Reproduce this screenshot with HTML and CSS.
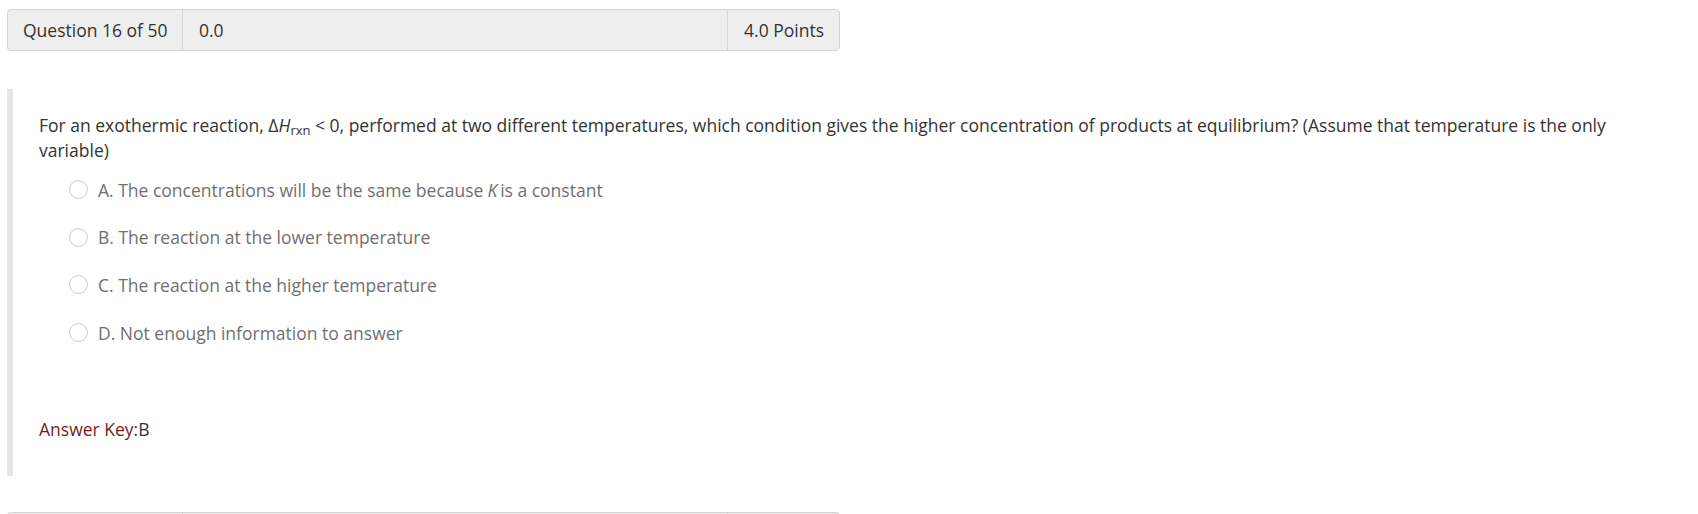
FILE: index.html
```html
<!DOCTYPE html>
<html lang="en">
<head>
<meta charset="utf-8">
<title>Question 16 of 50</title>
<link rel="stylesheet" href="styles.css">
</head>
<body>
<div class="page">
  <div class="qbar">
    <div class="cell num">Question 16 of 50</div>
    <div class="cell score">0.0</div>
    <div class="cell pts">4.0 Points</div>
  </div>
  <div class="question">
    <div class="prompt">For an exothermic reaction, Δ<i>H</i><sub>rxn</sub> &lt; 0, performed at two different temperatures, which condition gives the higher concentration of products at equilibrium? (Assume that temperature is the only variable)</div>
    <ul class="options">
      <li><span class="radio"></span>A. The concentrations will be the same because <i>K</i>&thinsp;is a constant</li>
      <li><span class="radio"></span>B. The reaction at the lower temperature</li>
      <li><span class="radio"></span>C. The reaction at the higher temperature</li>
      <li><span class="radio"></span>D. Not enough information to answer</li>
    </ul>
    <div class="answer"><span class="label">Answer Key:</span>B</div>
  </div>
  <div class="qbar">
    <div class="cell num"></div>
    <div class="cell score"></div>
    <div class="cell pts"></div>
  </div>
</div>
</body>
</html>
```
FILE: styles.css
```css
html, body {
  margin: 0;
  padding: 0;
  background: #ffffff;
}
body {
  font-family: "Open Sans", "Liberation Sans", Arial, sans-serif;
  font-size: 17.5px;
  color: #333333;
}
.page {
  padding: 9px 7px 0 7px;
}
.qbar {
  display: flex;
  width: 833px;
  height: 42px;
  box-sizing: border-box;
  background: #eeeeee;
  border: 1px solid #d2d2d2;
  border-radius: 4px;
  color: #333333;
}
.cell {
  display: flex;
  align-items: center;
  padding: 0 15px;
  white-space: nowrap;
}
.num {
  width: 175px;
  box-sizing: border-box;
  border-right: 1px solid #d8d8d8;
}
.score {
  flex: 1;
  padding-left: 16px;
  border-right: 1px solid #d8d8d8;
}
.pts {
  width: 111px;
  box-sizing: border-box;
  justify-content: flex-end;
}
.question {
  margin-top: 38px;
  margin-bottom: 36px;
  border-left: 6px solid #e6e6e6;
  padding: 24px 20px 35px 26px;
}
.prompt {
  line-height: 25px;
  color: #333333;
}
.prompt sub {
  font-size: 13px;
  vertical-align: -3px;
  line-height: 0;
}
.options {
  list-style: none;
  margin: 3px 0 0 30px;
  padding: 0;
  color: #707070;
}
.options li {
  display: flex;
  align-items: center;
  padding: 11.8px 0;
  line-height: 24px;
}
.options i {
  padding-left: 4px;
}
.radio {
  width: 19px;
  height: 19px;
  box-sizing: border-box;
  border: 1px solid #cccccc;
  border-radius: 50%;
  background: #ffffff;
  margin-right: 10px;
  flex: none;
}
.answer {
  margin-top: 61px;
  line-height: 24px;
  color: #333333;
}
.answer .label {
  color: #7a1c1c;
}
```
